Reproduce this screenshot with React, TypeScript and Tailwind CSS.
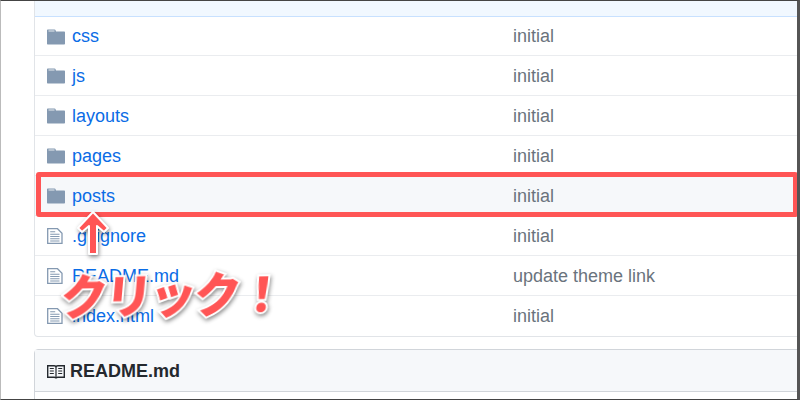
const rows = [
	{ name: "css", type: "dir", msg: "initial" },
	{ name: "js", type: "dir", msg: "initial" },
	{ name: "layouts", type: "dir", msg: "initial" },
	{ name: "pages", type: "dir", msg: "initial" },
	{ name: "posts", type: "dir", msg: "initial", active: true },
	{ name: ".gitignore", type: "file", msg: "initial" },
	{ name: "README.md", type: "file", msg: "update theme link" },
	{ name: "index.html", type: "file", msg: "initial" },
]

function FolderIcon() {
	return (
		<svg width="18" height="16" viewBox="0 0 18 16" className="shrink-0">
			<path
				d="M1 .5h6.500c.6 0 1 .4 1.200 1L9 2.500h8c.6 0 1 .4 1 1V14.500c0 .6-.4 1-1 1H1c-.6 0-1-.4-1-1V1.500c0-.6.4-1 1-1z"
				fill="#8499b1"
			/>
			<rect x="1.500" y="1.500" width="6" height="1" fill="#fff" opacity="0.8" />
		</svg>
	)
}

function FileIcon() {
	return (
		<svg width="18" height="16" viewBox="0 0 18 16" className="shrink-0">
			<path
				d="M.7.7h9.800l4.500 4.500v10.100H.7z"
				fill="none"
				stroke="#8499b1"
				strokeWidth="1.300"
			/>
			<path
				d="M3.200 6.200h9.300M3.200 8.500h9.300M3.200 10.800h9.300M3.200 13h9.300M3.200 3.800h5"
				stroke="#8499b1"
				strokeWidth="1.100"
			/>
		</svg>
	)
}

function BookIcon() {
	return (
		<svg width="18" height="16" viewBox="0 0 18 16" className="shrink-0">
			<path
				d="M.7 1.700h6.500c1 0 1.800.6 1.800 1.500 0-.9.800-1.500 1.800-1.500h6.500v11.600h-6.500c-1 0-1.800.5-1.800 1.200 0-.7-.8-1.200-1.800-1.200H.7z"
				fill="none"
				stroke="#24292e"
				strokeWidth="1.400"
			/>
			<path
				d="M9 3v11M2.800 4.500h4M2.800 7h4M2.800 9.500h4M11.200 4.500h4M11.200 7h4M11.200 9.500h4"
				stroke="#24292e"
				strokeWidth="1.200"
			/>
		</svg>
	)
}

export default function App() {
	return (
		<div className="relative h-[400px] w-[800px] overflow-hidden border-t border-b border-l border-r-[3px] border-t-[#444] border-b-[#444] border-l-[#bbb] border-r-[#555] bg-white font-['Liberation_Sans',sans-serif] text-[18px]">
			<div className="ml-[33px] mr-[-20px]">
				<div className="rounded-b border border-t-0 border-[#e1e4e8]">
					<div className="h-[16px] border-b border-[#c8e1ff] bg-[#f1f8ff]" />
					{rows.map((r, i) => (
						<div
							key={r.name}
							className={`flex items-center border-b border-[#eaecef] pt-px last:border-b-0 last:pt-0 ${
								i === 0 ? "h-[39px]" : "h-10"
							} ${r.active ? "bg-[#f6f8fa]" : ""}`}
						>
							<div className="flex w-[478px] items-center gap-[7px] pl-3">
								{r.type === "dir" ? <FolderIcon /> : <FileIcon />}
								<span className="text-[#0a6ce6]">{r.name}</span>
							</div>
							<span className="text-[#6a737d]">{r.msg}</span>
						</div>
					))}
				</div>
				<div className="mt-[12px] h-[60px] rounded-t border border-[#d1d5da]">
					<div className="flex h-[42px] items-center gap-[5px] border-b border-[#d1d5da] bg-[#f6f8fa] pt-[2px] pl-3">
						<BookIcon />
						<span className="font-bold text-[#24292e]">README.md</span>
					</div>
				</div>
			</div>

			{/* annotation overlay */}
			<div className="absolute left-[35px] top-[171px] h-[45px] w-[762px] rounded-[3px] border-[5px] border-[#ff5555]" />
			<svg
				width="40"
				height="50"
				viewBox="0 0 40 50"
				className="absolute left-[72px] top-[209px] drop-shadow-[1px_2px_2px_rgba(0,0,0,0.45)]"
			>
				<path
					d="M20 2 L35 18 L31 22 L24 16 L24 44 L16 44 L16 16 L9 22 L5 18 Z"
					fill="#ff5555"
					stroke="#fff"
					strokeWidth="2"
					strokeLinejoin="round"
				/>
			</svg>
			<div className="absolute left-[60px] top-[259px] origin-left -rotate-1 -skew-x-6 whitespace-nowrap font-['Noto_Sans_CJK_JP',sans-serif] text-[47px] leading-[70px] font-black tracking-[-2.500px] text-[#ff5555] [paint-order:stroke_fill] [-webkit-text-stroke:4px_#fff] drop-shadow-[1px_2px_2px_rgba(0,0,0,0.45)]">
				クリック！
			</div>
		</div>
	)
}
